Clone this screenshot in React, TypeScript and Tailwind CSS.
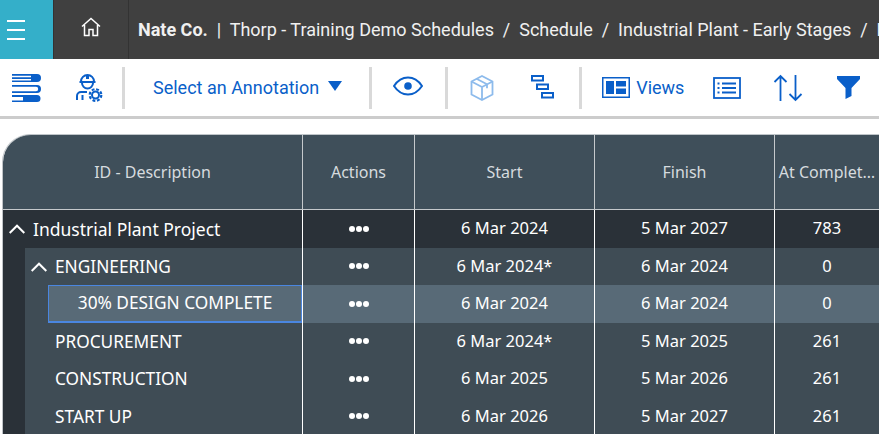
import React from 'react';

const BLUE = '#0a5fc9';

const rows = [
  { level: 0, label: 'Industrial Plant Project', open: true, start: '6 Mar 2024', finish: '5 Mar 2027', total: '783' },
  { level: 1, label: 'ENGINEERING', open: true, start: '6 Mar 2024*', finish: '6 Mar 2024', total: '0' },
  { level: 2, label: '30% DESIGN COMPLETE', selected: true, start: '6 Mar 2024', finish: '6 Mar 2024', total: '0' },
  { level: 1, label: 'PROCUREMENT', start: '6 Mar 2024*', finish: '5 Mar 2025', total: '261' },
  { level: 1, label: 'CONSTRUCTION', start: '6 Mar 2025', finish: '5 Mar 2026', total: '261' },
  { level: 1, label: 'START UP', start: '6 Mar 2026', finish: '5 Mar 2027', total: '261' },
];

const Chevron = () => (
  <svg width="16" height="10" viewBox="0 0 16 10" fill="none" stroke="white" strokeWidth="2" className="shrink-0">
    <path d="M0.700 9 L8 1.700 L15.300 9" />
  </svg>
);

const Dots = () => (
  <div className="flex justify-center gap-[1px]">
    <span className="size-[6px] rounded-full bg-white" />
    <span className="size-[6px] rounded-full bg-white" />
    <span className="size-[6px] rounded-full bg-white" />
  </div>
);

const Divider = () => <div className="h-[42px] w-[3px] bg-[#d9d9d9] shrink-0" />;

const Toolbar = () => (
  <div className="h-[60px] flex items-center border-b-[3px] border-[#cccccc] bg-white text-[#0a5fc9]">
    <svg width="30" height="30" viewBox="0 0 30 30" className="ml-[12px] shrink-0" fill={BLUE}>
      <path d="M0 1h25a4 4 0 0 1 4 4a4 4 0 0 1-4 4H0V7.500h19V6H0V4.200h19V2.800H0z" />
      <path d="M0 12h25a4 4 0 0 1 4 4a4 4 0 0 1-4 4H0v-1.800h24a2.200 2.200 0 0 0 0-4.400H0z" />
      <path d="M0 22h25a3.500 3.500 0 0 1 0 7H0v-1.500h11V24H0z" />
    </svg>
    <svg width="28" height="30" viewBox="0 0 28 30" className="ml-[33px] shrink-0" fill="none" stroke={BLUE} strokeWidth="2">
      <path d="M6 8.500a6.500 6.500 0 0 1 13 0" />
      <path d="M4.500 9h16" />
      <path d="M7 10a5.500 5.500 0 0 0 11 0" />
      <path d="M12.500 2v4" strokeWidth="3" />
      <path d="M2 27v-4a4 4 0 0 1 4-4h6M7.500 27v-5" />
      <circle cx="20.500" cy="22" r="3.500" />
      <circle cx="20.500" cy="22" r="5.800" strokeWidth="2.200" strokeDasharray="2.800 1.750" />
    </svg>
    <div className="ml-[19px]"><Divider /></div>
    <span className="ml-[28px] mt-[1px] font-['Roboto',sans-serif] text-[18px] leading-none whitespace-nowrap">Select an Annotation</span>
    <svg width="14" height="10" viewBox="0 0 14 10" className="ml-[9px] mb-[3px] shrink-0" fill={BLUE}>
      <path d="M0 0h14L7 10z" />
    </svg>
    <div className="ml-[27px]"><Divider /></div>
    <svg width="30" height="20" viewBox="0 0 30 20" className="ml-[21px] mb-[3px] shrink-0" fill="none" stroke={BLUE} strokeWidth="2">
      <path d="M1 10C5 4 10 1.500 15 1.500S25 4 29 10c-4 6-9 8.500-14 8.500S5 16 1 10z" />
      <circle cx="15" cy="10" r="3.800" fill={BLUE} stroke="none" />
    </svg>
    <div className="ml-[22px]"><Divider /></div>
    <svg width="24" height="28" viewBox="0 0 24 28" className="ml-[22px] shrink-0" fill="none" stroke="#8dbbec" strokeWidth="1.800">
      <path d="M12 2l10.500 5.500v13L12 26 1.500 20.500v-13z" />
      <path d="M1.500 7.500L12 13l10.500-5.500M12 13v13M6.500 4.800l10.500 5.500v4" />
    </svg>
    <svg width="24" height="24" viewBox="0 0 24 24" className="ml-[37px] mb-[1px] shrink-0" fill="none" stroke={BLUE} strokeWidth="2">
      <rect x="1" y="1" width="11" height="4.500" />
      <rect x="6" y="9.500" width="11" height="4.500" />
      <rect x="11" y="18" width="11" height="4.500" />
    </svg>
    <div className="ml-[24px]"><Divider /></div>
    <svg width="28" height="21" viewBox="0 0 28 21" className="ml-[20px] shrink-0" fill={BLUE}>
      <path fillRule="evenodd" d="M0 0h28v21H0zM1.500 1.500v18h25v-18z" />
      <rect x="4" y="4" width="8" height="13" />
      <rect x="14" y="4" width="10" height="5.500" />
      <rect x="14" y="11.500" width="10" height="5.500" />
    </svg>
    <span className="ml-[6px] mt-[1px] font-['Roboto',sans-serif] text-[18px] leading-none">Views</span>
    <svg width="28" height="22" viewBox="0 0 28 22" className="ml-[29px] shrink-0" fill="none" stroke={BLUE} strokeWidth="1.800">
      <rect x="1" y="1" width="26" height="20" />
      <path d="M9 6.500h14M9 11h14M9 15.500h14" />
      <path d="M4.500 6.500h2M4.500 11h2M4.500 15.500h2" />
    </svg>
    <svg width="30" height="28" viewBox="0 0 30 28" className="ml-[32px] shrink-0" fill="none" stroke={BLUE} strokeWidth="1.800">
      <path d="M7.500 27V2M1.500 8l6-6 6 6" />
      <path d="M22.500 1v25M16.500 20l6 6 6-6" />
    </svg>
    <svg width="23" height="23" viewBox="0 0 23 23" className="ml-[34px] shrink-0" fill={BLUE}>
      <path d="M0 0h23v3L14.500 12v8L8.500 23V12L0 3z" />
    </svg>
  </div>
);

const TopBar = () => (
  <div className="h-[59px] flex bg-[#404040]">
    <div className="w-[53px] shrink-0 bg-[#34afc9] flex flex-col justify-center gap-[7px] px-[7px]">
      <div className="h-[2px] w-[18px] bg-white" />
      <div className="h-[2px] w-[18px] bg-white" />
      <div className="h-[2px] w-[18px] bg-white" />
    </div>
    <div className="w-[76px] shrink-0 border-x border-[#333333] flex items-center justify-center pb-[5px] pr-[1px]">
      <svg width="20" height="20" viewBox="0 0 20 20" fill="none" stroke="white" strokeWidth="1.500">
        <path d="M1 9.500L10 1.500l9 8M3.500 8v10.500h4.500v-6h4v6h4.500V8" />
      </svg>
    </div>
    <div className="flex items-center pb-[1px] pl-[9px] font-['Roboto',sans-serif] text-[18px] text-[#f0f0f0] whitespace-pre overflow-hidden">
      <span className="font-bold">Nate Co.</span>
      <span>{'  |  Thorp - Training Demo Schedules  /  Schedule  /  Industrial Plant - Early Stages  /  Baseline'}</span>
    </div>
  </div>
);

const gridCols = 'grid grid-cols-[300px_112px_180px_180px_104px]';

const Header = () => (
  <div className={`${gridCols} h-[76px] bg-[#3f4f5a] text-[#d6dbdf] text-center text-[16px] border-t border-[#bfc5c9] rounded-tl-[28px]`}>
    {['ID - Description', 'Actions', 'Start', 'Finish', 'At Complet…'].map((title, i) => (
      <div key={title} className={`flex items-center justify-center whitespace-nowrap overflow-hidden border-b border-[#c5c9cc] ${i < 4 ? 'border-r border-[#c5c9cc]' : ''}`}>
        {title}
      </div>
    ))}
  </div>
);

export default function App() {
  return (
    <div className="w-[879px] h-[434px] overflow-hidden bg-white">
      <TopBar />
      <Toolbar />
      <div className="mt-[15px] ml-[2px] w-[877px] border-l border-[#c0c4c8] rounded-tl-[28px] font-['Noto_Sans',sans-serif] overflow-hidden">
        <Header />
        {rows.map((row) => {
          const rowBg = row.level === 0 ? 'bg-[#2a3138]' : row.selected ? 'bg-[#586a77]' : 'bg-[#3f4c55]';
          return (
            <div key={row.label} className={`${gridCols} h-[37.500px] text-white text-[16.500px] ${row.level === 0 ? 'bg-[#2a3138]' : 'bg-[#3f4c55]'}`}>
              <div className={`flex border-r border-white ${row.level === 0 ? '' : 'bg-[#2a3138]'}`}>
                <div className={`flex-1 min-w-0 flex ${row.level > 0 ? 'ml-[22px] bg-[#3f4c55]' : ''}`}>
                  {row.selected ? (
                    <div className={`ml-[23px] flex-1 flex items-center justify-center text-[17.300px] border border-b-2 border-[#4a86e0] ${rowBg}`}>{row.label}</div>
                  ) : (
                    <div className={`flex items-center gap-[8px] whitespace-nowrap ${row.open ? 'pl-[6px]' : 'pl-[30px]'} ${row.level === 0 ? 'text-[17.500px]' : 'pt-[1px] text-[17.300px]'}`}>
                      {row.open && <Chevron />}
                      <span>{row.label}</span>
                    </div>
                  )}
                </div>
              </div>
              <div className={`flex items-center justify-center border-r border-white ${rowBg}`}><Dots /></div>
              <div className={`flex items-center justify-center border-r border-white ${rowBg}`}>{row.start}</div>
              <div className={`flex items-center justify-center border-r border-white ${rowBg}`}>{row.finish}</div>
              <div className={`flex items-center justify-center ${rowBg}`}>{row.total}</div>
            </div>
          );
        })}
      </div>
    </div>
  );
}
